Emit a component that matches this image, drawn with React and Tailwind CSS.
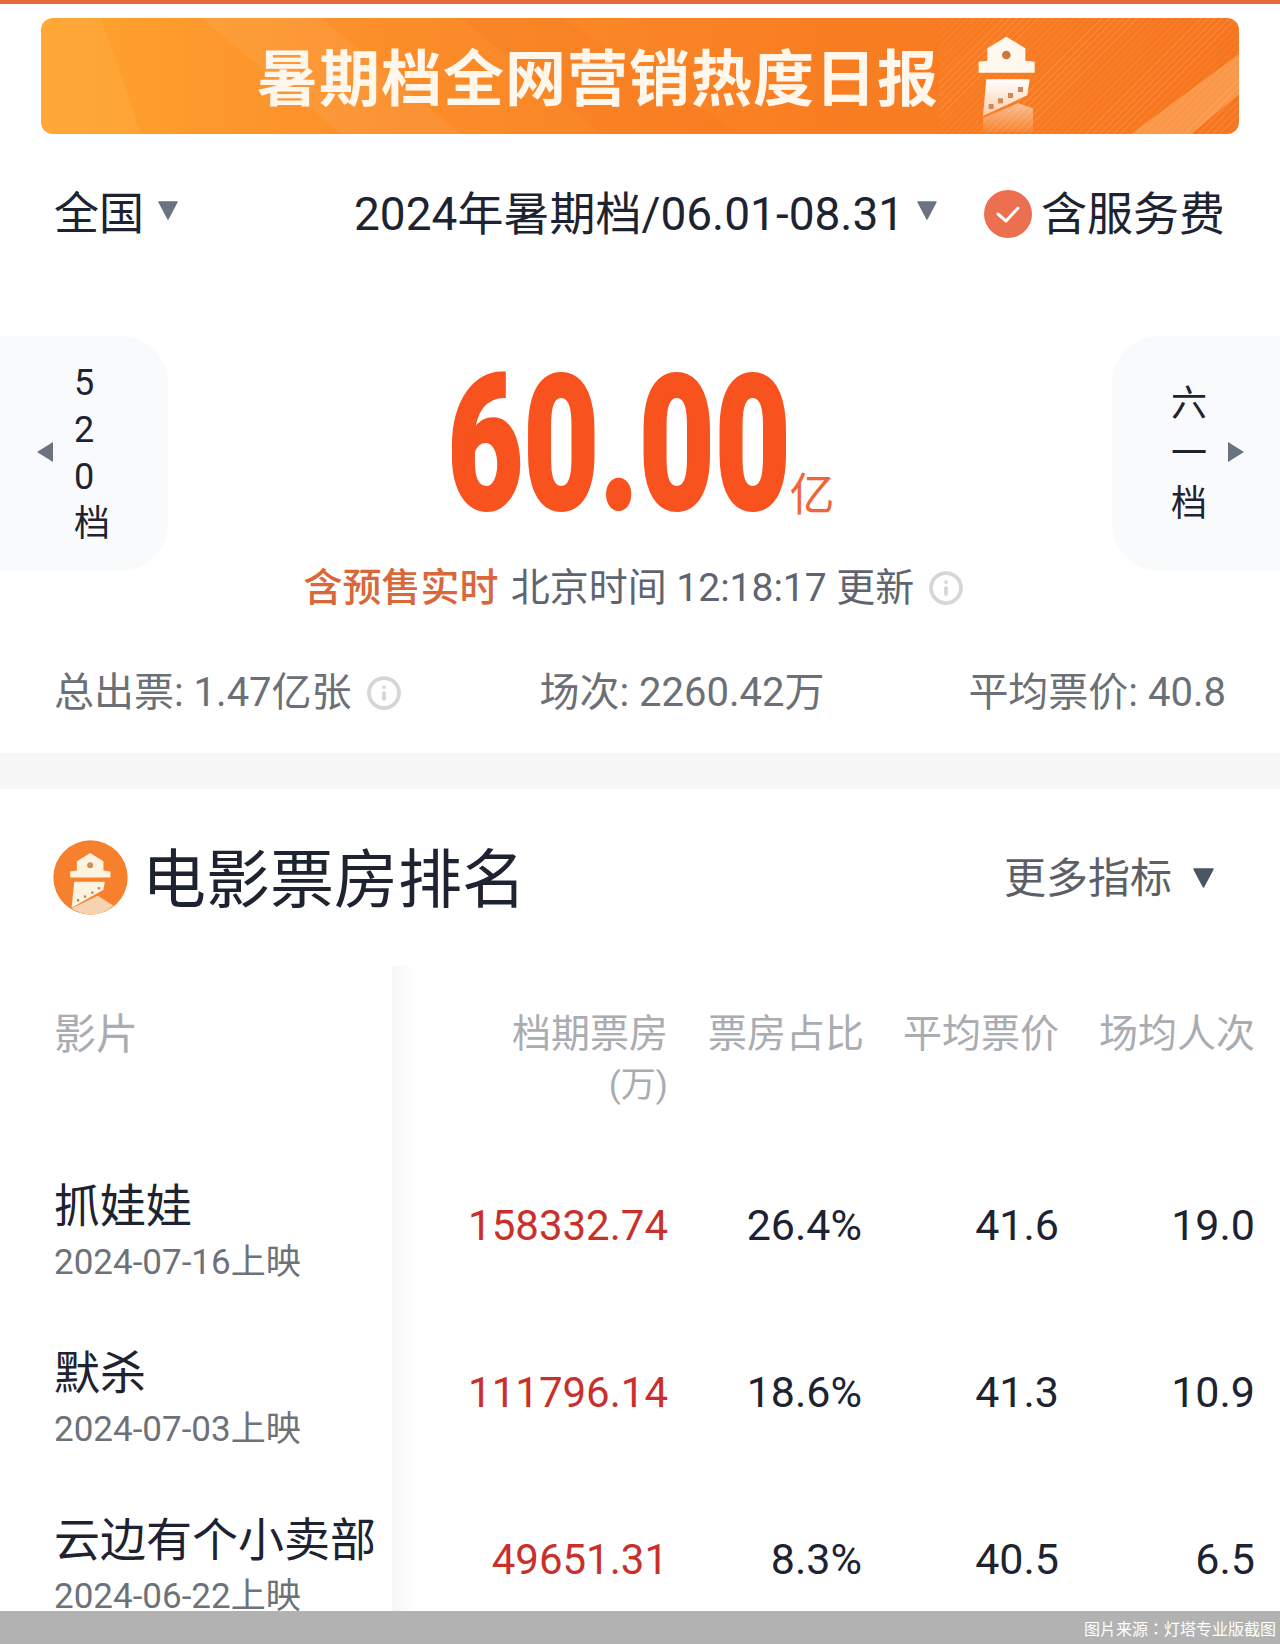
import { Info } from 'lucide-react';

const FONT = 'font-["Roboto","Noto_Sans_CJK_SC",sans-serif]';

const movies = [
  { name: '抓娃娃', date: '2024-07-16上映', total: '158332.74', share: '26.4%', price: '41.6', people: '19.0' },
  { name: '默杀', date: '2024-07-03上映', total: '111796.14', share: '18.6%', price: '41.3', people: '10.9' },
  { name: '云边有个小卖部', date: '2024-06-22上映', total: '49651.31', share: '8.3%', price: '40.5', people: '6.5' },
];

function Caret({ className }) {
  return (
    <svg viewBox="0 0 20 20" className={className}>
      <path d="M1 2 H19 L10 19 Z" fill="currentColor" stroke="currentColor" strokeWidth="1.5" strokeLinejoin="round" />
    </svg>
  );
}

function SideArrow({ left, className }) {
  return (
    <svg viewBox="0 0 18 22" className={className}>
      <path d={left ? 'M17 1 V21 L1 11 Z' : 'M1 1 V21 L17 11 Z'} fill="#6b7280" />
    </svg>
  );
}

function BannerTower() {
  return (
    <svg viewBox="0 0 420 360" className="h-[120px] w-[140px] shrink-0">
      <defs>
        <linearGradient id="towerBody" x1="0" y1="0" x2="0" y2="1">
          <stop offset="0" stopColor="#fff" />
          <stop offset="1" stopColor="#fff" stopOpacity="0.6" />
        </linearGradient>
        <linearGradient id="towerFoot" x1="0" y1="0" x2="0" y2="1">
          <stop offset="0" stopColor="#fff" stopOpacity="0.5" />
          <stop offset="1" stopColor="#fff" stopOpacity="0.08" />
        </linearGradient>
      </defs>
      <path d="M205 50 L262 85 V122 L290 125 V158 H122 V125 L148 122 V85 Z" fill="#fff8ee" />
      <circle cx="205" cy="105" r="13" fill="#c8793d" />
      <path d="M145 178 H275 L268 226 L135 288 Z" fill="url(#towerBody)" />
      <rect x="152" y="252" width="15" height="15" fill="#c98a5a" />
      <rect x="180" y="235" width="15" height="15" fill="#c98a5a" />
      <rect x="210" y="219" width="15" height="15" fill="#c98a5a" />
      <rect x="240" y="201" width="15" height="15" fill="#c98a5a" />
      <path d="M135 294 L240 250 L285 265 V335 H135 Z" fill="url(#towerFoot)" />
    </svg>
  );
}

function LogoMark() {
  return (
    <svg viewBox="70 58 226 226" className="h-[75px] w-[75px] shrink-0 -translate-y-[2px]">
      <circle cx="183" cy="171" r="112" fill="#f6802c" />
      <path d="M182 97 L222 122 V150 L243 153 V171 H122 V153 L142 150 V122 Z" fill="#fdf3de" />
      <circle cx="182" cy="134" r="9" fill="#c9925a" />
      <path d="M134 184 H226 L222 208 L126 262 Z" fill="#fdf3de" />
      <path d="M126 264 L205 226 L252 256 A112 112 0 0 1 183 283 A112 112 0 0 1 126 264 Z" fill="#f5d3ae" />
      <rect x="142" y="236" width="7" height="7" fill="#9d8d78" />
      <rect x="163" y="225" width="7" height="7" fill="#9d8d78" />
      <rect x="185" y="213" width="7" height="7" fill="#9d8d78" />
      <rect x="205" y="200" width="7" height="7" fill="#9d8d78" />
    </svg>
  );
}

function Banner() {
  return (
    <div className="relative mx-[41px] mt-[14px] flex h-[116px] items-center overflow-hidden rounded-[12px] bg-[linear-gradient(90deg,#ffa32f_0%,#fb8d29_30%,#f97e22_65%,#f6761f_100%)] pl-[216px]">
      <svg viewBox="0 0 1198 116" preserveAspectRatio="none" className="absolute inset-0 h-full w-full">
        <path d="M160 0 H280 L420 116 H300 Z" fill="#fff" opacity="0.06" />
        <path d="M420 0 H520 L700 116 H560 Z" fill="#e85f10" opacity="0.1" />
        <path d="M1198 36 L1090 116 H1150 L1198 76 Z" fill="#ffc27a" opacity="0.45" />
        <path d="M0 0 H60 L100 116 H0 Z" fill="#ffb347" opacity="0.35" />
      </svg>
      <div className="absolute inset-y-0 right-0 w-[300px] bg-[repeating-linear-gradient(135deg,rgba(255,255,255,0.1)_0px,rgba(255,255,255,0.1)_1px,transparent_1px,transparent_5px)]" />
      <span className="relative translate-y-[4px] whitespace-nowrap text-[61px] font-bold leading-none tracking-[1px] text-[#fff6ec]">暑期档全网营销热度日报</span>
      <div className="relative -ml-[1px] mt-[8px] shrink-0">
        <BannerTower />
      </div>
    </div>
  );
}

function Filters() {
  return (
    <div className="mt-[50px] flex h-[60px] items-center pl-[54px] pr-[55px] text-[46px] leading-none text-[#1d2330]">
      <span className="text-[45px]">全国</span>
      <Caret className="ml-[14px] h-[20px] w-[20px] -translate-y-[4px] text-[#6b7280]" />
      <span className="ml-[176px] whitespace-nowrap">2024年暑期档/06.01-08.31</span>
      <Caret className="ml-[13px] h-[20px] w-[20px] -translate-y-[4px] text-[#6b7280]" />
      <div className="ml-auto flex items-center gap-[9px]">
        <svg viewBox="0 0 48 48" className="h-[48px] w-[48px]">
          <circle cx="24" cy="24" r="24" fill="#ec6f50" />
          <path d="M14 24 L22 31 L34 18" fill="none" stroke="#fff" strokeWidth="3" strokeLinecap="round" strokeLinejoin="round" />
        </svg>
        <span>含服务费</span>
      </div>
    </div>
  );
}

function SideTab({ left, chars }) {
  return (
    <div className={`flex h-[235px] w-[168px] shrink-0 items-center bg-[#f9fafb] ${left ? 'rounded-r-[48px] pl-[36px]' : 'rounded-l-[48px] justify-end pr-[35px]'}`}>
      {left && <SideArrow left className="h-[22px] w-[18px] -translate-y-[2px]" />}
      <div className={`flex flex-col text-[36px] text-[#1d2330] ${left ? 'ml-[20px] items-start leading-[47px]' : 'mr-[20px] items-center leading-[50px]'}`}>
        {chars.map((c) => (
          <span key={c}>{c}</span>
        ))}
      </div>
      {!left && <SideArrow className="h-[22px] w-[18px] -translate-y-[2px]" />}
    </div>
  );
}

function Hero() {
  return (
    <div className="mt-[92px] flex items-start">
      <SideTab left chars={['5', '2', '0', '档']} />
      <div className="flex flex-1 flex-col items-center">
        <div className="flex h-[227px] items-start pl-[6px] pt-[8px]">
          <div className="flex h-[200px] w-[335px] items-center justify-center">
            <span className="origin-center scale-x-[0.69] whitespace-nowrap text-[190px] font-black leading-none text-[#f8521f] [-webkit-text-stroke:2px_#f8521f]">60.00</span>
          </div>
          <span className="ml-[3px] mt-[129px] text-[45px] leading-none text-[#f0643a]">亿</span>
        </div>
        <div className="flex h-[50px] items-center whitespace-nowrap pr-[12px] text-[39px] leading-none text-[#5f6570]">
          <span className="font-medium text-[#d9673a]">含预售实时</span>
          <span className="ml-[12px]">北京时间 12:18:17 更新</span>
          <Info className="ml-[14px] h-[36px] w-[36px] text-[#d6d6d6]" strokeWidth={2.5} />
        </div>
      </div>
      <SideTab chars={['六', '一', '档']} />
    </div>
  );
}

function Stats() {
  return (
    <div className="mt-[55px] flex h-[50px] items-center justify-between pl-[54px] pr-[54px] text-[40px] leading-none text-[#6b7076]">
      <div className="flex items-center">
        <span>总出票: 1.47亿张</span>
        <Info className="ml-[14px] -mr-[6px] h-[36px] w-[36px] text-[#d6d6d6]" strokeWidth={2.5} />
      </div>
      <span>场次: 2260.42万</span>
      <span>平均票价: 40.8</span>
    </div>
  );
}

function Heading() {
  return (
    <div className="mt-[50px] flex h-[80px] items-center pl-[53px] pr-[66px]">
      <LogoMark />
      <span className="ml-[14px] translate-y-[2px] text-[64px] leading-none text-[#1d2330]">电影票房排名</span>
      <span className="ml-auto text-[42px] leading-none text-[#5c6066]">更多指标</span>
      <Caret className="ml-[21px] h-[21px] w-[21px] -translate-y-[2px] text-[#4b5563]" />
    </div>
  );
}

function NumCell({ children, className = '' }) {
  return <div className={`flex items-center justify-end font-[450] leading-none ${className}`}>{children}</div>;
}

function RankTable() {
  const cols = 'grid grid-cols-[276px_194px_197px_196px]';
  return (
    <div className="mt-[47px] flex">
      <div className="relative w-[392px] shrink-0 bg-white pl-[54px]">
        <div className="absolute inset-y-0 left-full w-[24px] bg-gradient-to-r from-[#f6f6f6] to-white" />
        <div className="h-[176px] pt-[44px] text-[42px] leading-[50px] text-[#a9acb1]">影片</div>
        {movies.map((m) => (
          <div key={m.name} className="flex h-[167px] flex-col pt-[34px]">
            <div className="whitespace-nowrap text-[46px] leading-[60px] text-[#1d2330]">{m.name}</div>
            <div className="whitespace-nowrap text-[35px] leading-[54px] text-[#6d7278]">{m.date}</div>
          </div>
        ))}
      </div>
      <div className="flex-1">
        <div className={`${cols} h-[176px] pt-[43px] text-right text-[39px] leading-[50px] text-[#a9acb1]`}>
          <div>档期票房<br /><span className="text-[35px]">(万)</span></div>
          <div className="-mr-[2px]">票房占比</div>
          <div>平均票价</div>
          <div>场均人次</div>
        </div>
        {movies.map((m) => (
          <div key={m.name} className={`${cols} h-[167px] text-[43px] text-[#1d2330]`}>
            <NumCell className="text-[42px] text-[#c9302c]">{m.total}</NumCell>
            <NumCell>{m.share}</NumCell>
            <NumCell>{m.price}</NumCell>
            <NumCell>{m.people}</NumCell>
          </div>
        ))}
      </div>
    </div>
  );
}

export default function App() {
  return (
    <div className={`relative h-[1644px] w-[1280px] overflow-hidden bg-white ${FONT}`}>
      <div className="h-[4px] bg-[#e8673a]" />
      <Banner />
      <Filters />
      <Hero />
      <Stats />
      <div className="mt-[35px] h-[36px] bg-[#f7f7f8]" />
      <Heading />
      <RankTable />
      <div className='absolute inset-x-0 bottom-0 z-20 flex h-[33px] items-center justify-end bg-[#b2b2b2] pr-[4px] font-["Noto_Sans_CJK_TC"] text-[16px] leading-none text-white'>
        图片来源：灯塔专业版截图
      </div>
    </div>
  );
}
